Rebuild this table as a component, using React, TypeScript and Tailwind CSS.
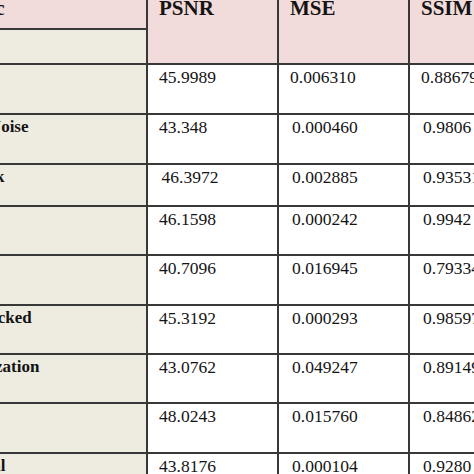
const ROWS: Array<{ name: string; psnr: string; mse: string; ssim: string; h: string; indent?: boolean; first?: boolean }> = [
  { name: 'None', psnr: '45.9989', mse: '0.006310', ssim: '0.886795', h: 'h-[50px]', first: true },
  { name: 'Burst Noise', psnr: '43.348', mse: '0.000460', ssim: '0.9806', h: 'h-[50px]' },
  { name: 'Bitmask', psnr: '46.3972', mse: '0.002885', ssim: '0.93531', h: 'h-[42px]', indent: true },
  { name: 'Scaling', psnr: '46.1598', mse: '0.000242', ssim: '0.9942', h: 'h-[49px]' },
  { name: 'JPEG', psnr: '40.7096', mse: '0.016945', ssim: '0.79334', h: 'h-[50px]' },
  { name: 'Re-attacked', psnr: '45.3192', mse: '0.000293', ssim: '0.98597', h: 'h-[49px]' },
  { name: 'Quantization', psnr: '43.0762', mse: '0.049247', ssim: '0.89149', h: 'h-[49px]' },
  { name: 'Resize', psnr: '48.0243', mse: '0.015760', ssim: '0.84862', h: 'h-[50px]' },
  { name: 'Original', psnr: '43.8176', mse: '0.000104', ssim: '0.9280', h: 'h-[50px]' },
]

export default function App() {
  return (
    <div className="w-[474px] h-[474px] overflow-hidden bg-white font-['Liberation_Serif',serif] text-[#141414]">
      <div className="ml-[-68px] mt-[-10px] w-max">
        {/* header */}
        <div className="grid grid-cols-[216px_131px_131px_160px] h-[75px] border-b-2 border-[#383838]">
          <div className="flex flex-col border-r-2 border-[#383838]">
            <div className="h-[40px] bg-[#f2dcdb] border-b-2 border-[#383838] pl-[12px] pt-[6px] text-[21px] leading-[24px] font-bold">
              Metric
            </div>
            <div className="flex-1 bg-[#eeece1]" />
          </div>
          <div className="bg-[#f2dcdb] border-r-2 border-[#383838] pl-[11px] pt-[6px] text-[21px] leading-[24px] font-bold">PSNR</div>
          <div className="bg-[#f2dcdb] border-r-2 border-[#383838] pl-[11px] pt-[6px] text-[21px] leading-[24px] font-bold">MSE</div>
          <div className="bg-[#f2dcdb] pl-[11px] pt-[6px] text-[21px] leading-[24px] font-bold">SSIM</div>
        </div>

        {ROWS.map(r => (
          <div key={r.name} className={`grid grid-cols-[216px_131px_131px_160px] ${r.h} border-b-2 border-[#383838] text-[17.5px] leading-[20px]`}>
            <div className="bg-[#eeece1] border-r-2 border-[#383838] pl-[12px] pt-[2px] font-bold text-[17px] whitespace-nowrap">{r.name}</div>
            <div className={`border-r-2 border-[#383838] pt-[2px] ${r.indent ? 'pl-[13.5px]' : 'pl-[11px]'}`}>{r.psnr}</div>
            <div className={`border-r-2 border-[#383838] pt-[2px] ${r.first ? 'pl-[11px]' : 'pl-[13px]'}`}>{r.mse}</div>
            <div className={`pt-[2px] whitespace-nowrap ${r.first ? 'pl-[11px]' : 'pl-[13px]'}`}>{r.ssim}</div>
          </div>
        ))}
      </div>
    </div>
  )
}
